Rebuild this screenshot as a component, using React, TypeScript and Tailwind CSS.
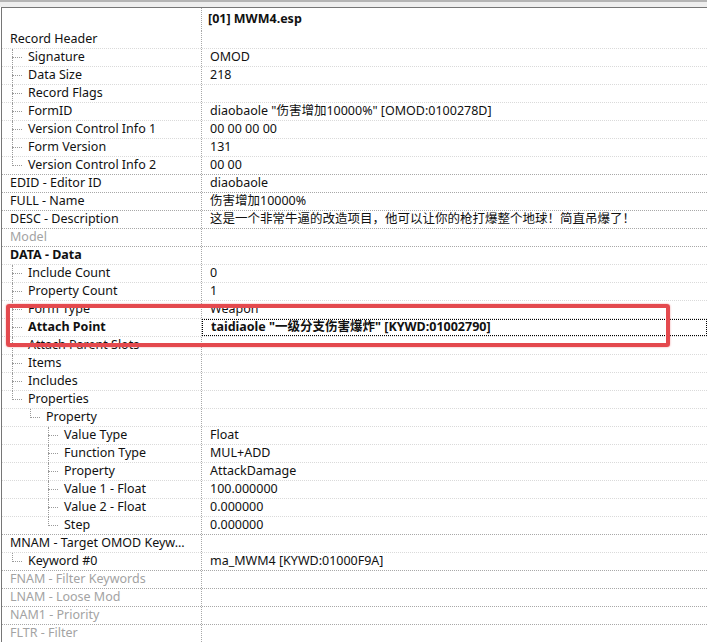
import React from 'react';

type Row = {
  label: string;
  value?: string;
  level: number;
  gray?: boolean;
  bold?: boolean;
  selected?: boolean;
};

const ROWS: Row[] = [
  { label: 'Record Header', level: 0 },
  { label: 'Signature', value: 'OMOD', level: 1 },
  { label: 'Data Size', value: '218', level: 1 },
  { label: 'Record Flags', level: 1 },
  { label: 'FormID', value: 'diaobaole "伤害增加10000%" [OMOD:0100278D]', level: 1 },
  { label: 'Version Control Info 1', value: '00 00 00 00', level: 1 },
  { label: 'Form Version', value: '131', level: 1 },
  { label: 'Version Control Info 2', value: '00 00', level: 1 },
  { label: 'EDID - Editor ID', value: 'diaobaole', level: 0 },
  { label: 'FULL - Name', value: '伤害增加10000%', level: 0 },
  { label: 'DESC - Description', value: '这是一个非常牛逼的改造项目，他可以让你的枪打爆整个地球！简直吊爆了！', level: 0 },
  { label: 'Model', level: 0, gray: true },
  { label: 'DATA - Data', level: 0, bold: true },
  { label: 'Include Count', value: '0', level: 1 },
  { label: 'Property Count', value: '1', level: 1 },
  { label: 'Form Type', value: 'Weapon', level: 1 },
  { label: 'Attach Point', value: 'taidiaole "一级分支伤害爆炸" [KYWD:01002790]', level: 1, bold: true, selected: true },
  { label: 'Attach Parent Slots', level: 1 },
  { label: 'Items', level: 1 },
  { label: 'Includes', level: 1 },
  { label: 'Properties', level: 1 },
  { label: 'Property', level: 2 },
  { label: 'Value Type', value: 'Float', level: 3 },
  { label: 'Function Type', value: 'MUL+ADD', level: 3 },
  { label: 'Property', value: 'AttackDamage', level: 3 },
  { label: 'Value 1 - Float', value: '100.000000', level: 3 },
  { label: 'Value 2 - Float', value: '0.000000', level: 3 },
  { label: 'Step', value: '0.000000', level: 3 },
  { label: 'MNAM - Target OMOD Keyw...', level: 0 },
  { label: 'Keyword #0', value: 'ma_MWM4 [KYWD:01000F9A]', level: 1 },
  { label: 'FNAM - Filter Keywords', level: 0, gray: true },
  { label: 'LNAM - Loose Mod', level: 0, gray: true },
  { label: 'NAM1 - Priority', level: 0, gray: true },
  { label: 'FLTR - Filter', level: 0, gray: true },
];

const PAD = ['pl-[8px]', 'pl-[26px]', 'pl-[44px]', 'pl-[62px]'];
const LINE_LEFT = ['left-[10px]', 'left-[28px]', 'left-[46px]'];

// does the node at index i (level L) have a later sibling?
const hasNextSibling = (i: number) => {
  const L = ROWS[i].level;
  for (let j = i + 1; j < ROWS.length; j++) {
    if (ROWS[j].level < L) return false;
    if (ROWS[j].level === L) return true;
  }
  return false;
};

const ancestorContinues = (i: number, k: number) => {
  for (let j = i - 1; j >= 0; j--) {
    if (ROWS[j].level === k) return hasNextSibling(j);
  }
  return false;
};

const font = { fontFamily: '"Noto Sans", "Noto Sans CJK SC", sans-serif' };

const TreeLines: React.FC<{ index: number }> = ({ index }) => {
  const L = ROWS[index].level;
  if (L === 0) return null;
  const last = !hasNextSibling(index);
  const guides: number[] = [];
  for (let k = 1; k < L; k++) if (ancestorContinues(index, k)) guides.push(k);
  return (
    <>
      {guides.map((k) => (
        <span key={k} className={`absolute top-0 h-[18px] border-l border-dotted border-[#9a9a9a] ${LINE_LEFT[k - 1]}`} />
      ))}
      <span
        className={`absolute top-0 border-l border-dotted border-[#9a9a9a] ${LINE_LEFT[L - 1]} ${last ? 'h-[9px]' : 'h-[18px]'}`}
      />
      <span className={`absolute top-[8px] w-[10px] border-t border-dotted border-[#9a9a9a] ${LINE_LEFT[L - 1]}`} />
    </>
  );
};

export default function App() {
  return (
    <div className="relative w-[707px] h-[642px] overflow-hidden bg-white text-[12.5px] text-[#111]" style={font}>
      {/* window chrome strip */}
      <div className="h-[7px] border-t-2 border-[#b4b4b4] bg-[#eeeeee]" />
      <div className="ml-px border-l border-t border-[#767676] bg-white">
        {/* header row */}
        <div className="flex h-[23px]">
          <div className="w-[200px] shrink-0 border-r border-dotted border-[#a8a8a8]" />
          <div className="flex items-center pl-[6px] font-bold">[01] MWM4.esp</div>
        </div>
        {ROWS.map((r, i) => {
          const next = ROWS[i + 1];
          const dark = !next || next.level === 0;
          return (
            <div
              key={i}
              className={`relative flex h-[18px] border-b border-dotted ${dark ? 'border-[#a8a8a8]' : 'border-[#dadada]'}`}
            >
              <div
                className={`relative flex w-[200px] shrink-0 items-center whitespace-nowrap border-r border-dotted border-[#a8a8a8] ${PAD[r.level]} ${r.gray ? 'text-[#a3a3a3]' : ''} ${r.bold ? 'font-bold' : ''}`}
              >
                <TreeLines index={i} />
                {r.label}
              </div>
              <div
                className={`flex flex-1 items-center whitespace-nowrap pl-[8px] ${r.bold ? 'font-bold' : ''} ${r.selected ? 'border border-dotted border-black pl-[7px]' : ''}`}
              >
                {r.value}
              </div>
            </div>
          );
        })}
      </div>
      {/* red annotation box */}
      <div className="absolute left-[6px] top-[304px] h-[43px] w-[664px] rounded-[3px] border-[4px] border-[#e4494e] shadow-[0_0_2px_rgba(228,73,78,0.6)]" />
    </div>
  );
}
